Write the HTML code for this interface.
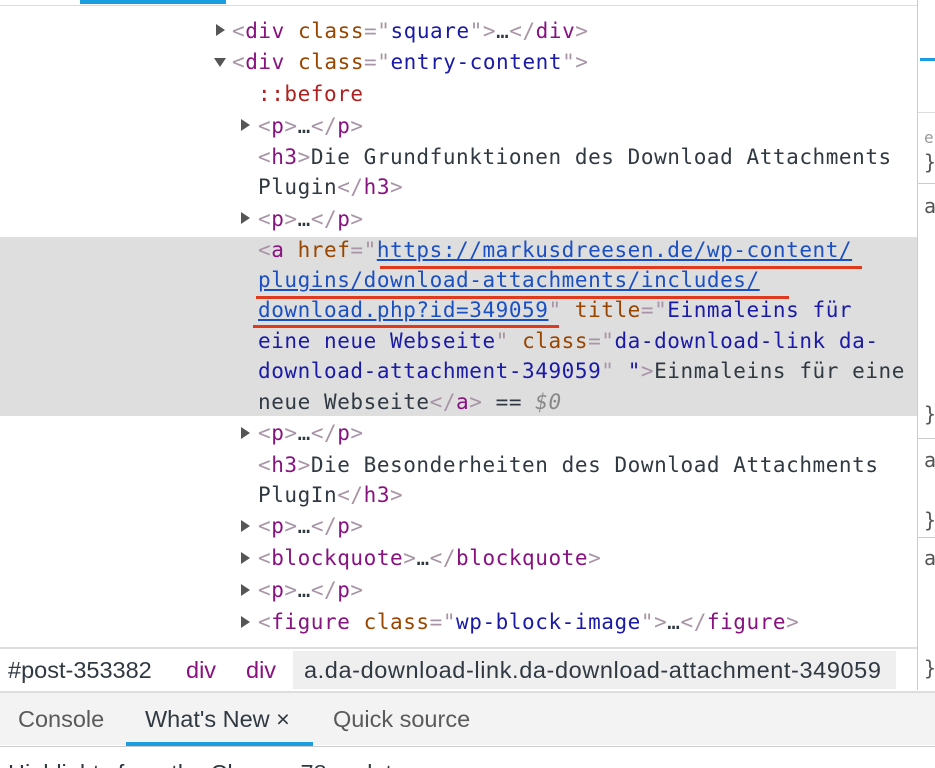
<!DOCTYPE html>
<html style="height:768px;overflow:hidden"><head><meta charset="utf-8"><style>
*{margin:0;padding:0;box-sizing:border-box}
body{width:935px;height:768px;overflow:hidden;background:#fff;position:relative;font-family:"DejaVu Sans Mono","Liberation Mono",monospace}
.l{position:absolute;height:31px;line-height:31px;font-size:21px;letter-spacing:0.56px;color:#303942;white-space:pre}
.b{color:#a894a6}.t{color:#881280}.an{color:#994500}.av{color:#1a1aa6}.ps{color:#b02020}
.u{color:#1a4fc4;text-decoration:underline}
.tri{position:absolute;width:0;height:0}
.tr{border-top:6px solid transparent;border-bottom:6px solid transparent;border-left:9px solid #555}
.td{border-left:6px solid transparent;border-right:6px solid transparent;border-top:9px solid #555}
.red{position:absolute;height:3px;background:#e03a1e}
.ui{font-family:"Liberation Sans",sans-serif;position:absolute;white-space:pre}
.rc{position:absolute;left:924px;font-size:20px;color:#555;font-family:"DejaVu Sans Mono",monospace}
</style></head><body>
<div style="position:absolute;left:0;top:0;width:917px;height:6px;background:#fff;border-bottom:1px solid #ddd"></div>
<div style="position:absolute;left:80px;top:0;width:146px;height:4px;background:#1a9ee0"></div>
<div style="position:absolute;left:0;top:237px;width:917px;height:179px;background:#dedede"></div>
<div style="position:absolute;left:917px;top:0;width:1px;height:690px;background:#ccc"></div>
<div style="position:absolute;left:918px;top:0;width:17px;height:690px;background:#fff"></div>
<div style="position:absolute;left:920px;top:58px;width:15px;height:3px;background:#1a9ee0"></div>
<div style="position:absolute;left:918px;top:112px;width:17px;height:1px;background:#ddd"></div>
<div style="position:absolute;left:918px;top:183px;width:17px;height:1px;background:#ccc"></div>
<div style="position:absolute;left:918px;top:438px;width:17px;height:1px;background:#ccc"></div>
<div style="position:absolute;left:918px;top:537px;width:17px;height:1px;background:#ccc"></div>
<div class="rc" style="top:128px;color:#999;font-size:16px">e</div>
<div class="rc" style="top:150px">}</div>
<div class="rc" style="top:194px">a</div>
<div class="rc" style="top:402px">}</div>
<div class="rc" style="top:448px">a</div>
<div class="rc" style="top:508px">}</div>
<div class="rc" style="top:546px">a</div>
<div class="rc" style="top:656px">}</div>

<div class="tri tr" style="left:216px;top:24px"></div>
<div class="l" style="left:232px;top:16px"><span class="b">&lt;</span><span class="t">div</span> <span class="an">class</span><span class="b">="</span><span class="av">square</span><span class="b">"&gt;</span>…<span class="b">&lt;/</span><span class="t">div</span><span class="b">&gt;</span></div>
<div class="tri td" style="left:214px;top:58px"></div>
<div class="l" style="left:232px;top:47px"><span class="b">&lt;</span><span class="t">div</span> <span class="an">class</span><span class="b">="</span><span class="av">entry-content</span><span class="b">"&gt;</span></div>
<div class="l ps" style="left:258px;top:79px">::before</div>
<div class="tri tr" style="left:241px;top:119px"></div>
<div class="l" style="left:258px;top:111px"><span class="b">&lt;</span><span class="t">p</span><span class="b">&gt;</span>…<span class="b">&lt;/</span><span class="t">p</span><span class="b">&gt;</span></div>
<div class="l" style="left:258px;top:142px"><span class="b">&lt;</span><span class="t">h3</span><span class="b">&gt;</span>Die Grundfunktionen des Download Attachments</div>
<div class="l" style="left:258px;top:172px">Plugin<span class="b">&lt;/</span><span class="t">h3</span><span class="b">&gt;</span></div>
<div class="tri tr" style="left:241px;top:212px"></div>
<div class="l" style="left:258px;top:204px"><span class="b">&lt;</span><span class="t">p</span><span class="b">&gt;</span>…<span class="b">&lt;/</span><span class="t">p</span><span class="b">&gt;</span></div>
<div class="l" style="left:258px;top:235px"><span class="b">&lt;</span><span class="t">a</span> <span class="an">href</span><span class="b">="</span><span class="u">https://markusdreesen.de/wp-content/</span></div>
<div class="l" style="left:258px;top:265px"><span class="u">plugins/download-attachments/includes/</span></div>
<div class="l" style="left:258px;top:295px"><span class="u">download.php?id=349059</span><span class="b">"</span> <span class="an">title</span><span class="b">="</span><span class="av">Einmaleins für</span></div>
<div class="l" style="left:258px;top:326px"><span class="av">eine neue Webseite</span><span class="b">"</span> <span class="an">class</span><span class="b">="</span><span class="av">da-download-link da-</span></div>
<div class="l" style="left:258px;top:356px"><span class="av">download-attachment-349059</span><span class="b">"</span> <span class="av">"</span><span class="b">&gt;</span>Einmaleins für eine</div>
<div class="l" style="left:258px;top:387px">neue Webseite<span class="b">&lt;/</span><span class="t">a</span><span class="b">&gt;</span> == <i style="color:#888">$0</i></div>
<div class="red" style="left:380px;top:266px;width:482px"></div>
<div class="red" style="left:256px;top:296px;width:533px"></div>
<div class="red" style="left:253px;top:325px;width:306px"></div>
<div class="tri tr" style="left:241px;top:427px"></div>
<div class="l" style="left:258px;top:418px"><span class="b">&lt;</span><span class="t">p</span><span class="b">&gt;</span>…<span class="b">&lt;/</span><span class="t">p</span><span class="b">&gt;</span></div>
<div class="l" style="left:258px;top:450px"><span class="b">&lt;</span><span class="t">h3</span><span class="b">&gt;</span>Die Besonderheiten des Download Attachments</div>
<div class="l" style="left:258px;top:480px">PlugIn<span class="b">&lt;/</span><span class="t">h3</span><span class="b">&gt;</span></div>
<div class="tri tr" style="left:241px;top:520px"></div>
<div class="l" style="left:258px;top:511px"><span class="b">&lt;</span><span class="t">p</span><span class="b">&gt;</span>…<span class="b">&lt;/</span><span class="t">p</span><span class="b">&gt;</span></div>
<div class="tri tr" style="left:241px;top:552px"></div>
<div class="l" style="left:258px;top:543px"><span class="b">&lt;</span><span class="t">blockquote</span><span class="b">&gt;</span>…<span class="b">&lt;/</span><span class="t">blockquote</span><span class="b">&gt;</span></div>
<div class="tri tr" style="left:241px;top:584px"></div>
<div class="l" style="left:258px;top:575px"><span class="b">&lt;</span><span class="t">p</span><span class="b">&gt;</span>…<span class="b">&lt;/</span><span class="t">p</span><span class="b">&gt;</span></div>
<div class="tri tr" style="left:241px;top:616px"></div>
<div class="l" style="left:258px;top:607px"><span class="b">&lt;</span><span class="t">figure</span> <span class="an">class</span><span class="b">="</span><span class="av">wp-block-image</span><span class="b">"&gt;</span>…<span class="b">&lt;/</span><span class="t">figure</span><span class="b">&gt;</span></div>

<div style="position:absolute;left:0;top:647px;width:917px;height:2px;background:#ddd"></div>
<div style="position:absolute;left:0;top:649px;width:917px;height:42px;background:#fff"></div>
<div style="position:absolute;left:293px;top:651px;width:603px;height:38px;background:#efefef"></div>
<div class="ui" style="left:8px;top:657px;font-size:23.5px;color:#303942">#post-353382</div>
<div class="ui" style="left:186px;top:657px;font-size:23.5px;color:#881280">div</div>
<div class="ui" style="left:246px;top:657px;font-size:23.5px;color:#881280">div</div>
<div class="ui" style="left:304px;top:657px;font-size:23.5px;letter-spacing:0.6px;color:#303942">a.da-download-link.da-download-attachment-349059</div>
<div style="position:absolute;left:0;top:691px;width:935px;height:2px;background:#ddd"></div>
<div style="position:absolute;left:0;top:693px;width:935px;height:52px;background:#f3f3f3"></div>
<div class="ui" style="left:18px;top:706px;font-size:23.5px;color:#5a5a5a">Console</div>
<div class="ui" style="left:145px;top:706px;font-size:23.5px;color:#303942">What's New ×</div>
<div class="ui" style="left:333px;top:706px;font-size:23.5px;color:#5a5a5a">Quick source</div>
<div style="position:absolute;left:126px;top:742px;width:187px;height:4px;background:#1a9ee0"></div>
<div style="position:absolute;left:0;top:746px;width:935px;height:1px;background:#ccc"></div>
<div class="ui" style="left:8px;top:760px;font-size:23.5px;color:#303942">Highlights from the Chrome 78 update</div>
</body></html>
